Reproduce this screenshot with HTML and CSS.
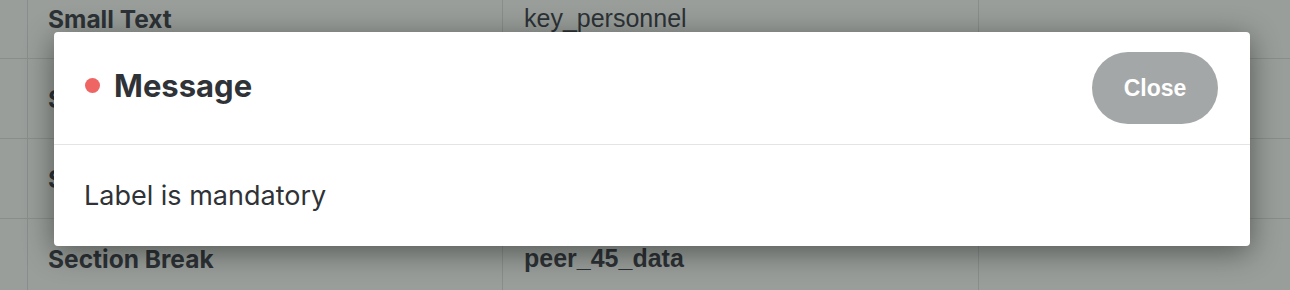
FILE: index.html
```html
<!DOCTYPE html>
<html lang="en">
<head>
    <meta charset="UTF-8">
    <meta name="viewport" content="width=device-width, initial-scale=1.0">
    <title>Fields</title>
    <link rel="stylesheet" href="styles.css">
</head>
<body>
    <div class="fields">
        <div class="row">
            <div class="cell gutter"></div>
            <div class="cell label">Small Text</div>
            <div class="cell name">key_personnel</div>
            <div class="cell"></div>
        </div>
        <div class="row">
            <div class="cell gutter"></div>
            <div class="cell label">Select</div>
            <div class="cell name">grant_type</div>
            <div class="cell"></div>
        </div>
        <div class="row">
            <div class="cell gutter"></div>
            <div class="cell label">Small Text</div>
            <div class="cell name">funding_source</div>
            <div class="cell"></div>
        </div>
        <div class="row">
            <div class="cell gutter"></div>
            <div class="cell label">Section Break</div>
            <div class="cell name strong">peer_45_data</div>
            <div class="cell"></div>
        </div>
    </div>

    <div class="modal">
        <div class="modal-header">
            <div class="modal-title"><span class="dot"></span>Message</div>
            <button class="btn-close" id="close">Close</button>
        </div>
        <div class="modal-body">Label is mandatory</div>
    </div>

    <script>
        document.getElementById('close').onclick = () => document.querySelector('.modal').style.display = 'none';
    </script>
</body>
</html>
```

FILE: styles.css
```css
body { margin: 0; background: #999e9a; font-family: Inter, "Noto Sans", sans-serif; color: #2d3236; overflow: hidden; height: 290px; }
.fields { margin-top: -21px; }
.row { display: grid; grid-template-columns: 28px 475px 476px 1fr; height: 80px; border-bottom: 1px solid #898e8c; box-sizing: border-box; }
.cell { display: flex; align-items: center; border-right: 1px solid #898e8c; font-size: 25px; padding-left: 20px; }
.cell.gutter { padding-left: 0; }
.cell:last-child { border-right: none; }
.label, .strong { font-weight: 700; }
.label { font-size: 24.5px; }
.name { font-family: "Liberation Sans", Arial, sans-serif; font-size: 25px; padding-left: 21px; }

.modal { position: absolute; top: 32px; left: 54px; width: 1196px; height: 214px; background: #fff; border-radius: 4px; box-shadow: 0 6px 30px rgba(0, 0, 0, 0.45); }
.modal-header { display: flex; align-items: center; justify-content: space-between; height: 112px; padding: 0 32px 0 31px; border-bottom: 1px solid #e4e4e4; }
.modal-title { display: flex; align-items: center; gap: 14px; margin-bottom: 5px; font-size: 31px; font-weight: 700; color: #2f3337; }
.dot { width: 15px; height: 15px; border-radius: 50%; background: #ef6563; }
.btn-close { width: 126px; height: 72px; border: none; border-radius: 36px; background: #a4a7a7; color: #fff; font-family: "Liberation Sans", Arial, sans-serif; font-size: 23px; font-weight: 700; cursor: pointer; }
.modal-body { display: flex; align-items: center; height: 101px; padding-left: 30px; font-size: 27px; color: #2f3337; }
```
